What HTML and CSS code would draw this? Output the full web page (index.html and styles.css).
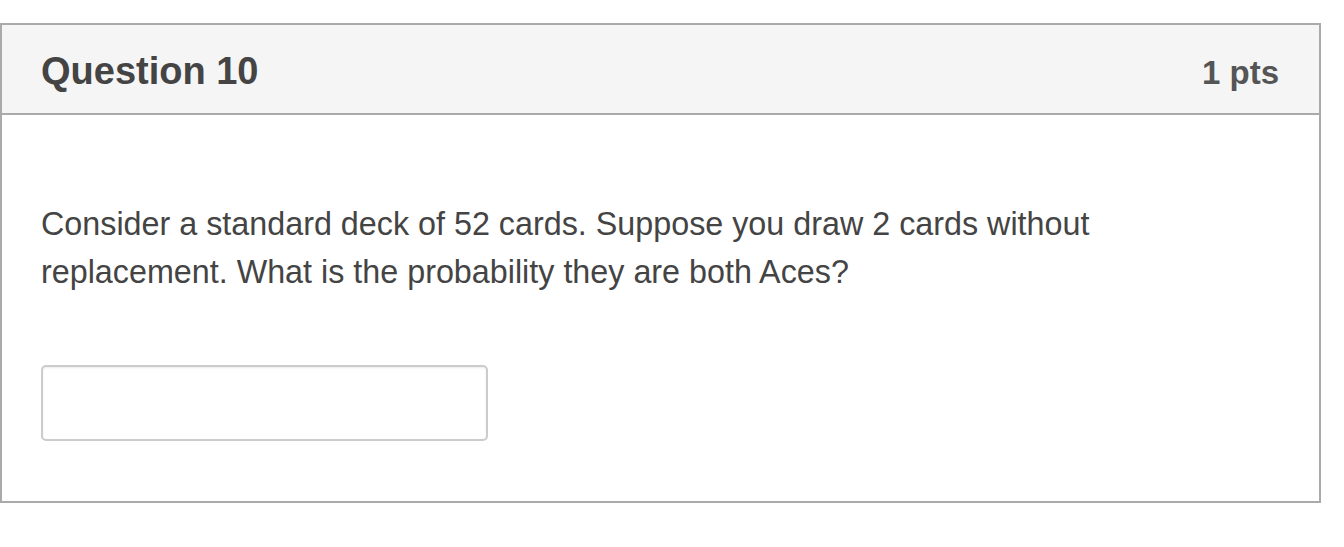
FILE: index.html
```html
<!DOCTYPE html>
<html lang="en">
<head>
<meta charset="utf-8">
<title>Question 10</title>
<link rel="stylesheet" href="styles.css">
</head>
<body>
<div class="page">
  <div class="question">
    <div class="header">
      <h2 class="title">Question 10</h2>
      <span class="pts">1 pts</span>
    </div>
    <div class="content">
      <p class="text">Consider a standard deck of 52 cards. Suppose you draw 2 cards without replacement. What is the probability they are both Aces?</p>
      <input class="answer" type="text" aria-label="Answer">
    </div>
  </div>
</div>
</body>
</html>
```
FILE: styles.css
```css
html, body {
  margin: 0;
  padding: 0;
  background: #ffffff;
}

body {
  font-family: "Liberation Sans", Arial, Helvetica, sans-serif;
  color: #444444;
}

.page {
  padding-top: 23px;
}

.question {
  width: 1321px;
  box-sizing: border-box;
  border: 2px solid #aaaaaa;
  background: #ffffff;
}

.header {
  display: flex;
  align-items: baseline;
  justify-content: space-between;
  background: #f5f5f5;
  border-bottom: 2px solid #aaaaaa;
  padding: 24px 40px 20px 39px;
  height: 90px;
  box-sizing: border-box;
}

.title {
  margin: 0;
  font-size: 38px;
  line-height: 44px;
  font-weight: bold;
  color: #444444;
}

.pts {
  font-size: 33px;
  line-height: 44px;
  font-weight: bold;
  color: #555555;
}

.content {
  padding: 85px 39px 60px 39px;
}

.text {
  margin: 0;
  max-width: 1120px;
  font-size: 32.3px;
  line-height: 48px;
  color: #444444;
}

.answer {
  display: block;
  margin-top: 69px;
  width: 447px;
  height: 76px;
  box-sizing: border-box;
  border: 2px solid #cccccc;
  border-radius: 5px;
  background: #ffffff;
  box-shadow: inset 0 1px 2px rgba(0, 0, 0, 0.08);
  outline: none;
  padding: 0 12px;
  font-family: inherit;
  font-size: 28px;
}
```
